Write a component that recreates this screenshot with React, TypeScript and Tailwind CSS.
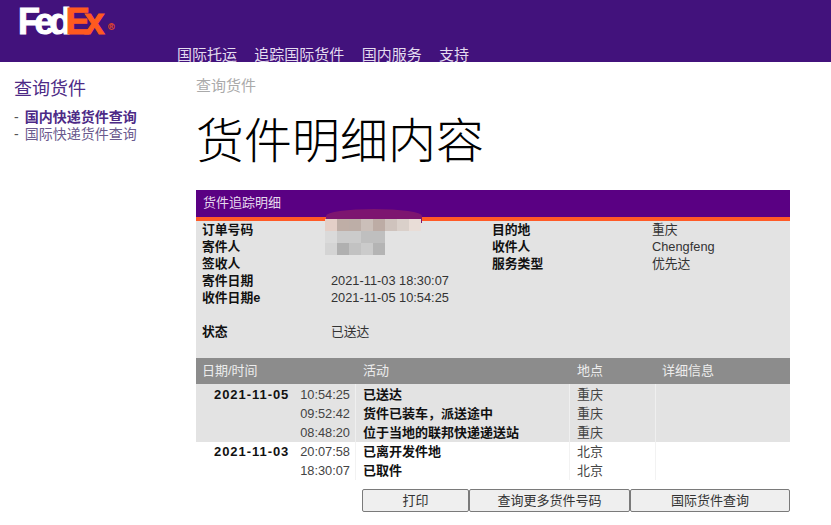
import React from "react";

const font = "font-['Liberation_Sans','Noto_Sans_CJK_SC',sans-serif]";

const nav = ["国际托运", "追踪国际货件", "国内服务", "支持"];

const infoRows = [
  ["订单号码", "", "目的地", "重庆"],
  ["寄件人", "", "收件人", "Chengfeng"],
  ["签收人", "", "服务类型", "优先达"],
  ["寄件日期", "2021-11-03 18:30:07", "", ""],
  ["收件日期e", "2021-11-05 10:54:25", "", ""],
  ["", "", "", ""],
  ["状态", "已送达", "", ""],
];

const events = [
  { date: "2021-11-05", time: "10:54:25", what: "已送达", where: "重庆", gray: true },
  { date: "", time: "09:52:42", what: "货件已装车，派送途中", where: "重庆", gray: true },
  { date: "", time: "08:48:20", what: "位于当地的联邦快递递送站", where: "重庆", gray: true },
  { date: "2021-11-03", time: "20:07:58", what: "已离开发件地", where: "北京", gray: false },
  { date: "", time: "18:30:07", what: "已取件", where: "北京", gray: false },
];

// the blurred out order number and sender
const blurRows = [
  ["bg-[#e4cfc7]", "bg-[#bfaea6]", "bg-[#bdaea7]", "bg-[#cbbfb9]", "bg-[#bdaca5]", "bg-[#cfc3bd]", "bg-[#dad0ca]", "bg-[#e9ddd7]"],
  ["bg-[#dadada]", "bg-[#cbcbcb]", "bg-[#cbcbcb]", "bg-[#bfbfbf]", "bg-[#bfbfbf]"],
  ["bg-[#d4d4d4]", "bg-[#b0b0b0]", "bg-[#c2c2c2]", "bg-[#cbcbcb]", "bg-[#b4b4b4]"],
];

function FedExLogo() {
  return (
    <div className="flex items-start font-['Liberation_Sans',sans-serif] text-[36px] leading-[40px] font-bold tracking-[-5.4px] [-webkit-text-stroke:1px_currentColor]">
      <span className="text-white">Fed</span>
      <span className="text-[#ff5a1f]">Ex</span>
      <span className="mt-[20px] ml-[9px] text-[9px] leading-[10px] tracking-normal text-[#d9432f] [-webkit-text-stroke:0.3px_currentColor]">®</span>
    </div>
  );
}

export default function App() {
  return (
    <div className={`${font} h-[525px] w-[831px] overflow-hidden bg-white`}>
      <header className="flex h-[62px] bg-[#42127c]">
        <div className="ml-[18px] w-[159px] pt-[2px]">
          <FedExLogo />
        </div>
        <nav className="flex h-full items-end gap-[17.3px] overflow-hidden text-[15px] leading-[15px] text-[#e4dcef]">
          {nav.map((n) => (
            <a key={n}>{n}</a>
          ))}
        </nav>
      </header>

      <div className="flex">
        <aside className="w-[196px] pt-[16px] pl-[14px] text-[#4d2a86]">
          <div className="text-[18px] leading-[22px]">查询货件</div>
          <ul className="mt-[9px] text-[14px] leading-[17px]">
            <li className="flex gap-[6px]">
              <span className="text-[#555]">-</span>
              <b>国内快递货件查询</b>
            </li>
            <li className="flex gap-[6px] text-[#6b5a8e]">
              <span className="text-[#555]">-</span>
              国际快递货件查询
            </li>
          </ul>
        </aside>

        <main className="w-[594px] pt-[15px]">
          <div className="text-[15px] leading-[18px] text-[#aaaaaa]">查询货件</div>
          <h1 className="mt-[18px] text-[48px] leading-[58px] font-light text-black">货件明细内容</h1>

          <section className="relative mt-[19px]">
            <div className="h-[27px] bg-[#5a0083] pl-[7px] text-[13px] leading-[26px] text-[#e6d9ee]">货件追踪明细</div>
            <div className="h-[4px] bg-[#ff5a26]" />
            <div className="h-[137px] bg-[#e3e3e3] pl-[6px] text-[12.8px] leading-[17px]">
              {infoRows.map((r, i) => (
                <div key={i} className="grid h-[17px] grid-cols-[129px_161px_160px_1fr]">
                  <b className="text-[#111]">{r[0]}</b>
                  <span className="text-[#333]">{r[1]}</span>
                  <b className="text-[#111]">{r[2]}</b>
                  <span className="text-[#333]">{r[3]}</span>
                </div>
              ))}
            </div>

            <div className="absolute top-[19px] left-[130px] h-[14px] w-[96px] rounded-t-[50%] bg-[#7d1570]" />
            <div className="absolute top-[29px] left-[129px] flex flex-col">
              {blurRows.map((row, i) => (
                <div key={i} className="flex">
                  {row.map((c, j) => (
                    <div key={j} className={`h-[12px] w-[12px] ${c}`} />
                  ))}
                </div>
              ))}
            </div>
          </section>

          <div className="grid h-[26px] grid-cols-[160px_214px_86px_1fr] bg-[#8c8c8c] text-[13px] leading-[26px] text-[#ececec]">
            <span className="pl-[6px]">日期/时间</span>
            <span className="pl-[7px]">活动</span>
            <span className="pl-[7px]">地点</span>
            <span className="pl-[6px]">详细信息</span>
          </div>

          <div className="text-[13px] leading-[19px]">
            {events.map((e) => (
              <div
                key={e.time}
                className={`grid h-[19px] grid-cols-[160px_214px_86px_1fr] first:h-[20px] first:leading-[21px] ${e.gray ? "bg-[#e3e3e3]" : "bg-white"}`}
              >
                <div className={`flex border-r pr-[5px] pl-[18px] ${e.gray ? "border-[#efefef]" : "border-[#f2f2f2]"}`}>
                  <b className="flex-1 tracking-[0.95px] text-[#111]">{e.date}</b>
                  <span className="text-[12.8px] text-[#444]">{e.time}</span>
                </div>
                <b className={`border-r pl-[7px] text-[#111] ${e.gray ? "border-[#efefef]" : "border-[#f2f2f2]"}`}>{e.what}</b>
                <span className={`border-r pl-[7px] text-[#444] ${e.gray ? "border-[#efefef]" : "border-[#f2f2f2]"}`}>{e.where}</span>
                <span />
              </div>
            ))}
          </div>

          <div className="mt-[9px] ml-[166px] flex h-[23px] text-[13px] text-[#333]">
            <button className="w-[107px] rounded-[2px] border border-[#7a7a7a] bg-[#efefef]">打印</button>
            <button className="w-[161px] rounded-[2px] border border-[#7a7a7a] bg-[#efefef]">查询更多货件号码</button>
            <button className="w-[160px] rounded-[2px] border border-[#7a7a7a] bg-[#efefef]">国际货件查询</button>
          </div>
        </main>
      </div>
    </div>
  );
}
